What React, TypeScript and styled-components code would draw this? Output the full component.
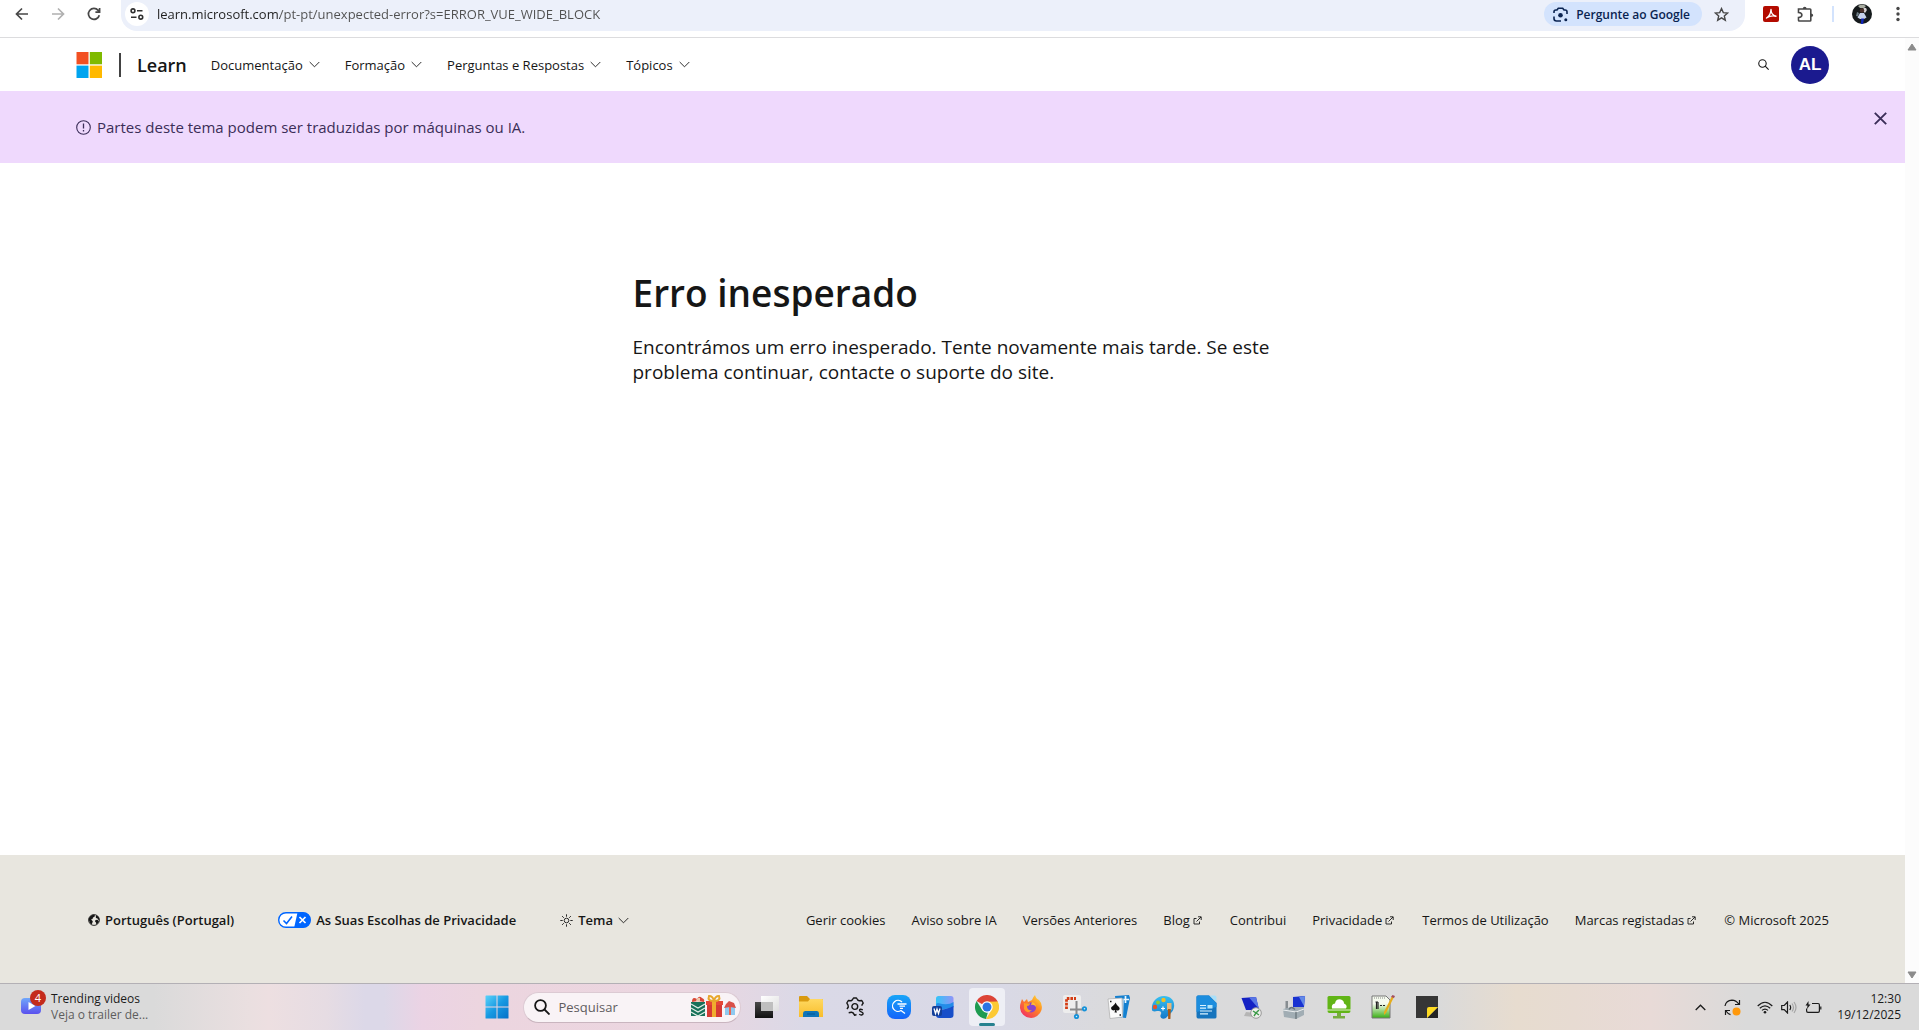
import React from "react";
import styled, { createGlobalStyle } from "styled-components";

const GlobalStyle = createGlobalStyle`
  * { box-sizing: border-box; }
  body { margin: 0; background: #fff; color: #161616; font-family: "Open Sans", "Noto Sans", sans-serif; }
  button, input { font: inherit; color: inherit; border: 0; padding: 0; background: none; }
  svg { display: block; flex: none; }
  a { color: inherit; text-decoration: none; white-space: nowrap; }
`;

const Screen = styled.div`
  display: flex;
  flex-direction: column;
  height: 100vh;
  overflow: hidden;
`;

/* ---------- Browser toolbar ---------- */

const Toolbar = styled.header`
  display: flex;
  align-items: flex-start;
  height: 38px;
  border-bottom: 1px solid #dcdcde;
`;

const ToolGroup = styled.div<{ $gap: number; $left: number; $right: number }>`
  display: flex;
  align-items: center;
  gap: ${(p) => p.$gap}px;
  height: 28px;
  padding: 0 ${(p) => p.$right}px 0 ${(p) => p.$left}px;
`;

const IconButton = styled.button<{ $color?: string }>`
  display: flex;
  align-items: center;
  justify-content: center;
  color: ${(p) => p.$color ?? "#474747"};
`;

const AddressBar = styled.div`
  display: flex;
  align-items: center;
  flex: 1;
  height: 31px;
  padding: 0 16px 3px 4px;
  background: #ecf0fa;
  border-radius: 0 0 16px 16px;
`;

const SiteInfo = styled.button`
  display: flex;
  align-items: center;
  justify-content: center;
  width: 24px;
  height: 24px;
  border-radius: 12px;
  background: #fff;
`;

const Url = styled.input`
  flex: 1;
  min-width: 0;
  height: 24px;
  margin-left: 8px;
  font-size: 13px;
  color: #1f1f1f;
  background: linear-gradient(90deg, #1f1f1f 123px, #505050 123px);
  -webkit-background-clip: text;
  background-clip: text;
  -webkit-text-fill-color: transparent;
`;

const AskChip = styled.button`
  display: flex;
  align-items: center;
  gap: 8px;
  height: 24px;
  padding: 0 12px 0 9px;
  border-radius: 12px;
  background: #d3e3fd;
  color: #0a2351;
  font-size: 12px;
  font-weight: 600;
  white-space: nowrap;
  margin-right: 12px;
`;

const Separator = styled.span`
  width: 2px;
  height: 16px;
  background: #d3e3fd;
`;

/* ---------- Page ---------- */

const Viewport = styled.div`
  display: flex;
  flex: 1;
  min-height: 0;
`;

const Page = styled.div`
  display: flex;
  flex-direction: column;
  flex: 1;
  min-width: 0;
`;

const ScrollTrack = styled.div`
  display: flex;
  flex-direction: column;
  justify-content: space-between;
  align-items: center;
  width: 14px;
  padding: 5px 0 4px;
  background: #fcfcfc;
`;

const SiteNav = styled.nav`
  display: flex;
  align-items: center;
  height: 53px;
  padding: 0 76px;
`;

const Brand = styled.a`
  margin-left: 16px;
  padding-top: 1px;
  font-size: 18px;
  line-height: 24px;
  font-weight: 600;
`;

const Divider = styled.span`
  width: 2px;
  height: 24px;
  margin-left: 17px;
  background: #424242;
`;

const Menu = styled.div`
  display: flex;
  flex: 1;
  gap: 25px;
  margin-left: 24px;
`;

const MenuButton = styled.button`
  display: flex;
  align-items: center;
  gap: 6px;
  font-size: 13px;
  line-height: 20px;
  white-space: nowrap;
`;

const Avatar = styled.button`
  width: 38px;
  height: 38px;
  margin-left: 22px;
  border-radius: 50%;
  background: #1b1a8f;
  color: #fff;
  font-family: "Liberation Sans", Arial, sans-serif;
  font-size: 17px;
  font-weight: 700;
`;

const Banner = styled.section`
  display: flex;
  justify-content: space-between;
  height: 72px;
  padding: 18px 18px 0 76px;
  background: #efd9fd;
  color: #3b2e58;
`;

const BannerText = styled.p`
  display: flex;
  align-items: center;
  gap: 6px;
  height: 36px;
  margin: 0;
  font-size: 15px;
`;

const BannerClose = styled.button`
  display: flex;
  align-items: flex-end;
  height: 16px;
`;

const Main = styled.main`
  flex: 1;
  width: 640px;
  margin: 0 auto;
  padding-top: 104px;
`;

const Title = styled.h1`
  margin: 0;
  font-size: 37px;
  line-height: 52px;
  font-weight: 600;
`;

const Lead = styled.p`
  margin: 16px 0 0;
  font-size: 19px;
  line-height: 25px;
`;

const SiteFooter = styled.footer`
  display: flex;
  align-items: center;
  justify-content: space-between;
  height: 128px;
  padding: 2px 76px 0 88px;
  background: #e8e6df;
  font-size: 13px;
  line-height: 20px;
`;

const Row = styled.div<{ $gap: number }>`
  display: flex;
  align-items: center;
  gap: ${(p) => p.$gap}px;
`;

const FooterAction = styled.button`
  display: flex;
  align-items: center;
  gap: 5px;
  font-weight: 600;
  white-space: nowrap;
`;

const FooterLink = styled.a<{ $external?: boolean }>`
  display: flex;
  align-items: center;
  gap: 3px;
  padding-right: ${(p) => (p.$external ? 2 : 0)}px;
`;

/* ---------- Taskbar ---------- */

const Taskbar = styled.footer`
  display: grid;
  grid-template-columns: 1fr auto 1fr;
  align-items: center;
  height: 47px;
  border-top: 1px solid #b3b0b5;
  background: linear-gradient(
    90deg,
    #dadada 8%, #eadfe0 13%, #eddfe1 14%, #e6dce3 17%, #dcd8e8 19%, #dcd8e8 20%, #ebd3e4 22%,
    #ecd5df 25%, #ebd6e0 36%, #dad9e7 42%, #d9d9e6 52%, #dadadc 58%, #dadada 75%,
    #e7dccf 79%, #e7dbd2 82%, #e8dad7 86%, #dadada 91%
  );
`;

const Widget = styled.button`
  display: flex;
  align-items: center;
  gap: 4px;
  padding-left: 19px;
  text-align: left;
`;

const WidgetText = styled.span<{ $muted?: boolean }>`
  display: block;
  font-size: 12px;
  line-height: 16px;
  color: ${(p) => (p.$muted ? "#5d5d5d" : "#1b1b1b")};
`;

const Apps = styled.div`
  display: flex;
  align-items: center;
  padding-left: 4px;
`;

const AppButton = styled.button<{ $active?: boolean }>`
  display: flex;
  position: relative;
  align-items: center;
  justify-content: center;
  width: 44px;
  height: 46px;
  ${(p) =>
    p.$active &&
    `&::before { content: ""; position: absolute; inset: 4px; border-radius: 4px; background: #eeeff5; }
     &::after { content: ""; position: absolute; bottom: 4px; left: 14px; width: 16px; height: 3px; border-radius: 2px; background: #27818f; }`}
  svg { position: relative; }
`;

const SearchBox = styled.label`
  display: flex;
  align-items: center;
  width: 218px;
  height: 31px;
  margin: 0 4px;
  padding: 0 4px 0 10px;
  border-radius: 16px;
  background: #f9f3f6;
  border: 1px solid #dccad3;
  border-bottom-color: #c9b5bf;
`;

const SearchInput = styled.input`
  flex: 1;
  min-width: 0;
  margin-left: 9px;
  font-size: 13px;
  &::placeholder { color: #5f5c5e; opacity: 1; }
`;

const Tray = styled.div`
  display: flex;
  align-items: center;
  justify-content: flex-end;
  padding-right: 18px;
  color: #1b1b1b;
`;

const TrayButton = styled.button<{ $gap: number }>`
  display: flex;
  margin-right: ${(p) => p.$gap}px;
`;

const Clock = styled.time`
  font-size: 12px;
  line-height: 16px;
  text-align: right;
`;

/* ---------- Icons ---------- */

const line = { fill: "none", stroke: "currentColor" } as const;

const Chevron = () => (
  <svg width="11" height="7" viewBox="0 0 11 7" {...line} strokeWidth=".9"><path d="M.7 1l4.8 4.8L10.3 1" /></svg>
);

const External = () => (
  <svg width="9" height="9" viewBox="0 0 9 9" {...line} strokeWidth=".9"><path d="M3.500 2.500H1V8h5.500V5.500M3.500 5.500L8 1M5 .8h3.200V4" /></svg>
);

const BackArrow = ({ flip }: { flip?: boolean }) => (
  <svg width="14" height="14" viewBox="0 0 14 14" {...line} strokeWidth="1.700">
    <path d={flip ? "M1 7h11M7 1.5L12.5 7 7 12.5" : "M13 7H2M7 1.5L1.5 7 7 12.5"} />
  </svg>
);

const Reload = () => (
  <svg width="14" height="14" viewBox="0 0 14 14" {...line} strokeWidth="1.700"><path d="M12.300 8.200A5.500 5.500 0 1 1 11.200 3.400L12.500 4.800M12.600 1v4.200H8.400" /></svg>
);

const Tune = () => (
  <svg width="14" height="12" viewBox="0 0 14 12" {...line} stroke="#303030" strokeWidth="1.600">
    <circle cx="3" cy="2.800" r="1.900" /><path d="M7 2.800h5.500M1 9.200h5.500" /><circle cx="10.800" cy="9.200" r="1.900" />
  </svg>
);

const Lens = () => (
  <svg width="15" height="15" viewBox="0 0 15 15" {...line} strokeWidth="1.600">
    <path d="M1 6V4.800Q1 3 2.800 3H4l1.300-1.800h4.400L11 3h1.200Q14 3 14 4.800V7M1 9.500v2Q1 14 3.500 14H8" />
    <circle cx="7.500" cy="8.300" r="2.300" fill="currentColor" stroke="none" /><circle cx="12.800" cy="12.800" r="1.500" fill="currentColor" stroke="none" />
  </svg>
);

const Star = () => (
  <svg width="15" height="15" viewBox="0 0 15 15" {...line} strokeWidth="1.400"><path d="M7.500 1.600l1.800 4 4.300.4-3.300 2.900 1 4.300-3.800-2.300-3.800 2.300 1-4.300L1.400 6l4.300-.4z" /></svg>
);

const Acrobat = () => (
  <svg width="16" height="16" viewBox="0 0 16 16">
    <rect width="16" height="16" rx="2" fill="#b30b00" />
    <path d="M3.500 12C6 10.500 7.800 7.500 8 3.500 8 7.500 10 9.500 13 10.200 9.500 9.300 6.500 10 3.500 12z" fill="none" stroke="#fff" strokeWidth="1.400" strokeLinejoin="round" />
  </svg>
);

const Puzzle = () => (
  <svg width="17" height="17" viewBox="0 0 17 17" {...line} strokeWidth="1.600">
    <path d="M1.500 3H13q.8 0 .8.800V14.200q0 .8-.8.800H2.300q-.8 0-.8-.8V11.500q3.400-.3 3.400-2.500T1.500 6.500z" />
    <path d="M5.800 3Q5.800.8 7.700.8T9.600 3zM13.800 7.500q2.400 0 2.400 1.800t-2.400 1.800z" fill="currentColor" stroke="none" />
  </svg>
);

const Profile = () => (
  <svg width="20" height="20" viewBox="0 0 20 20">
    <circle cx="10" cy="10" r="10" fill="#151a1c" />
    <path d="M6 2q4-3 8 0l-2 2H8z" fill="#a9ada2" /><path d="M11.500 4q3.500-1 3.200 2.500L13 9l-2-2z" fill="#d9d5d6" />
    <circle cx="10" cy="6.500" r="2.200" fill="#4a302b" /><path d="M5.500 13.500L8 9h4l2.500 4.500L12 15H8z" fill="#c8d3ec" /><path d="M9.200 14.500H12L11 20H9z" fill="#1226b8" /><path d="M5 8l2 1-1 3.500-2-.5z" fill="#6f7f88" />
  </svg>
);

const Dots = () => (
  <svg width="16" height="16" viewBox="0 0 16 16" fill="currentColor"><circle cx="8" cy="2.500" r="1.700" /><circle cx="8" cy="8" r="1.700" /><circle cx="8" cy="13.500" r="1.700" /></svg>
);

const MsLogo = () => (
  <svg width="26" height="26" viewBox="0 0 26 26">
    <path fill="#f25022" d="M.5 0h12v12.300H.500z" /><path fill="#7fba00" d="M13.800 0H26v12.300H13.800z" />
    <path fill="#00a4ef" d="M.5 13.600h12V26H.500z" /><path fill="#ffb900" d="M13.800 13.600H26V26H13.800z" />
  </svg>
);

const Search = ({ size, weight }: { size: number; weight: number }) => (
  <svg width={size} height={size} viewBox="0 0 16 16" {...line} strokeWidth={weight}><circle cx="6.500" cy="6.500" r="5.400" /><path d="M10.500 10.500l5 5" /></svg>
);

const Info = () => (
  <svg width="15" height="15" viewBox="0 0 15 15" {...line} strokeWidth="1.100"><circle cx="7.500" cy="7.500" r="6.800" /><path d="M7.500 3.500v5M7.500 10v1.400" strokeWidth="1.300" /></svg>
);

const Cross = () => (
  <svg width="13" height="13" viewBox="0 0 13 13" {...line} strokeWidth="1.900"><path d="M.8.8l11.400 11.400M12.200.8L.8 12.200" /></svg>
);

const Globe = () => (
  <svg width="12" height="12" viewBox="0 0 12 12" {...line}>
    <circle cx="6" cy="6" r="5.400" strokeWidth=".9" />
    <path fill="currentColor" stroke="none" d="M.8 4.500L2.500 2 5 .8l2 .5-.5 1.500L5 3.500 4.500 5 3 5.500 4.800 7.200 4.300 9l-.8 1.500Q1.500 9 1 6.500zM8.500 1.300L10.600 3 11.400 5.500 10.500 6l-1-1.500L8 4l-.3-1.300zM7.500 6l2-.3 1.500 1.500L9.500 9.800 8.300 10.500 8 8.500 7 7.500z" />
  </svg>
);

const PrivacyPill = () => (
  <svg width="33" height="16" viewBox="0 0 33 16">
    <rect x=".7" y=".7" width="31.600" height="14.600" rx="7.300" fill="#fff" stroke="#0066ff" strokeWidth="1.400" />
    <path d="M19.500.5H25a7.500 7.500 0 0 1 0 15h-8.800z" fill="#0066ff" />
    <path d="M5.500 8.500l3 3 5.500-7" fill="none" stroke="#0066ff" strokeWidth="1.600" /><path d="M21.500 5l6 6M27.500 5l-6 6" stroke="#fff" strokeWidth="1.700" />
  </svg>
);

const Sun = () => (
  <svg width="13" height="13" viewBox="0 0 13 13" {...line} strokeWidth=".9">
    <circle cx="6.500" cy="6.500" r="2.300" /><path d="M6.500.3v2.400M6.500 10.300v2.400M.3 6.500h2.400M10.300 6.500h2.400M2.100 2.100l1.700 1.700M9.200 9.200l1.700 1.700M2.100 10.900l1.700-1.700M9.200 3.800l1.700-1.700" />
  </svg>
);

const ScrollArrow = ({ down }: { down?: boolean }) => (
  <svg width="10" height="8" viewBox="0 0 10 8"><path fill="#8b8b8b" stroke="#8b8b8b" strokeLinejoin="round" d={down ? "M1 1h8L5 7z" : "M1 7h8L5 1z"} /></svg>
);

const VideoBadge = () => (
  <svg width="28" height="34" viewBox="0 0 28 34">
    <defs><linearGradient id="vid" x2="0" y2="1"><stop stopColor="#70a7fa" /><stop offset="1" stopColor="#5a50ee" /></linearGradient></defs>
    <rect x="2" y="8" width="20" height="16" rx="4" fill="url(#vid)" /><path d="M9.500 12v8l7-4z" fill="#fff" />
    <circle cx="19" cy="8" r="8" fill="#c42b1c" /><text x="19" y="12" fill="#fff" fontSize="11" textAnchor="middle">4</text>
  </svg>
);

const Windows = () => (
  <svg width="24" height="24" viewBox="0 0 24 24">
    <defs><linearGradient id="win" x2="1" y2="1"><stop stopColor="#5ad2fa" /><stop offset=".5" stopColor="#1799e2" /><stop offset="1" stopColor="#0670c8" /></linearGradient></defs>
    <path fill="url(#win)" d="M1 .5h10.500v11H.5V1zM12.500.5H23q.5 0 .5.500v10.500h-11zM.5 12.500h11v11H1q-.5 0-.5-.5zM12.500 12.500h11V23q0 .5-.5.500H12.500z" />
  </svg>
);

const Gifts = () => (
  <svg width="46" height="24" viewBox="0 0 46 24">
    <path d="M1 7h14v14H1z" fill="#19715a" /><path d="M1 9l7 4 7-4M1 13l7 4 7-4M1 17l7 4 7-4" fill="none" stroke="#e5eee8" strokeWidth="1.200" />
    <path d="M2 7q0-6 5-3 2-4 5-1 3 1 2 4l-6-1z" fill="#d94737" /><path d="M6 6q1-4 4-3v4z" fill="#eec8ad" />
    <path d="M16 6h17v4H16z" fill="#e44637" /><path d="M17 10h15v12H17z" fill="#d63a35" /><path d="M22 5h4v17h-4z" fill="#f0ad2e" />
    <path d="M24 6Q17 6 19 1q4 0 5 5 1-5 5-5 2 5-5 5" fill="none" stroke="#e7a72c" strokeWidth="2" />
    <path d="M35 12h10v8H35z" fill="#8fc9ef" /><path d="M39 12h2v8h-2z" fill="#e96854" /><path d="M34 13l2-4 3-3 5 2 2 5-6-1z" fill="#d95049" />
  </svg>
);

const TaskView = () => (
  <svg width="24" height="24" viewBox="0 0 24 24">
    <defs>
      <linearGradient id="tv" x2="0" y2="1"><stop stopColor="#494949" /><stop offset="1" stopColor="#111" /></linearGradient>
      <linearGradient id="tw" x2="1" y2="1"><stop stopColor="#fff" /><stop offset="1" stopColor="#dedede" /></linearGradient>
    </defs>
    <path d="M0 7h18v16H0z" fill="url(#tv)" /><path d="M6 1h18v15H6z" fill="url(#tw)" /><path d="M6 7h12v9H6z" fill="#bfbfbf" />
  </svg>
);

const Folder = () => (
  <svg width="24" height="24" viewBox="0 0 24 24">
    <defs><linearGradient id="fo" x2="0" y2="1"><stop stopColor="#ffd962" /><stop offset="1" stopColor="#f8bd2c" /></linearGradient></defs>
    <path d="M0 2q0-1 1-1h7l3 3H23q1 0 1 1v4H0z" fill="#d99a10" /><path d="M0 6.500h9L11 4h12q1 0 1 1v17H0z" fill="url(#fo)" />
    <path d="M4 22v-3.500Q4 16 6 16h12q2 0 2 2.500V22z" fill="#0f75b8" /><path d="M8 19h8" stroke="#075694" />
  </svg>
);

const GearS = () => (
  <svg width="18" height="20" viewBox="0 0 18 20" fill="none" stroke="#181818" strokeWidth="1.400" strokeLinejoin="round">
    <path d="M10.500 17.500l-1.800.800-1.500-2.300-1.800-.8-2.700.5M1 12l1.300-2-.3-1.800L.8 6 2.300 3.500l2.700.3 1.300-.9L7.500 1h3l1.200 2 1.600.8 2.500-.3L17.200 6 16 7.800v1" /><circle cx="8.800" cy="9.500" r="2.900" />
    <path d="M16.800 12.800q-3.300-1.300-3.300.5c0 1.700 3.600 1.300 3.600 3.200 0 1.800-2.600 1.800-3.900.8" strokeWidth="1.400" />
  </svg>
);

const QuickSearch = () => (
  <svg width="24" height="24" viewBox="0 0 24 24">
    <defs><linearGradient id="qs" x2="0" y2="1"><stop stopColor="#18a5f8" /><stop offset="1" stopColor="#1464fa" /></linearGradient></defs>
    <rect width="24" height="24" rx="8" fill="url(#qs)" /><path d="M15 7A5.500 5.500 0 1 0 14 15.500l4 3M10.500 9h9M12.500 11.200h5.500M13 13.400h3" fill="none" stroke="#fff" strokeWidth="1.300" />
  </svg>
);

const Word = () => (
  <svg width="22" height="24" viewBox="0 0 22 24">
    <defs><linearGradient id="wd" x2="1"><stop stopColor="#32c5f8" /><stop offset="1" stopColor="#9194f7" /></linearGradient></defs>
    <rect x="4" y="1" width="17.500" height="13" rx="2.500" fill="url(#wd)" /><path d="M4 10Q4 8 6 8q10 3 15.500-1v5L4 16z" fill="#238ce8" />
    <path d="M4 15q10 0 17.500-4v9q0 3-3 3H7q-3 0-3-3z" fill="#174ec9" /><rect y="11" width="10" height="10" rx="2" fill="#133f99" />
    <path d="M2 13.500l1.500 5L5 14l1.500 4.500 1.500-5" fill="none" stroke="#fff" strokeWidth="1.300" />
  </svg>
);

const Chrome = () => (
  <svg width="24" height="24" viewBox="0 0 24 24">
    <path d="M12 12L1.600 6A12 12 0 0 1 22.400 6z" fill="#dc4437" /><path d="M12 6.500L22.400 6A12 12 0 0 1 11 24l5.800-9.500z" fill="#fcc934" />
    <path d="M1.600 6l5.600 9 4.800 2.500 1-.500-2 7A12 12 0 0 1 1.600 6z" fill="#1e9b50" />
    <path d="M1.600 6L7 6.500h15.700L22.400 6z" fill="#dc4437" />
    <circle cx="12" cy="12" r="5.700" fill="#fff" /><circle cx="12" cy="12" r="4.500" fill="#2b74e5" />
  </svg>
);

const Firefox = () => (
  <svg width="24" height="24" viewBox="0 0 24 24">
    <defs><linearGradient id="ff" x1="1" x2=".2" y2="1"><stop stopColor="#ffe73e" /><stop offset=".45" stopColor="#ff8b21" /><stop offset="1" stopColor="#f12e64" /></linearGradient></defs>
    <path d="M2 7l1-3 2 3 3-3 1 3 4-2q1-3 3-5 1 4 4 5 4 4 2.500 10A11 11 0 0 1 1 13q0-4 1-6z" fill="url(#ff)" />
    <circle cx="12" cy="12.500" r="5" fill="#8744cc" /><path d="M5 8q4 1 6 0 0 3-3 3 0 5 5 4-5 5-8-1z" fill="#ff9c25" /><path d="M13 7q4 1 4 5-2-3-5-2z" fill="#ffbd31" />
  </svg>
);

const Snip = () => (
  <svg width="24" height="24" viewBox="0 0 24 24">
    <rect width="18" height="18" rx="2" fill="#ededed" /><path d="M3.500 14V3.500H13" fill="none" stroke="#d43c14" strokeWidth="2.800" strokeDasharray="2.600 1" />
    <path d="M13.500 6v14M7 14.500h12" stroke="#88898b" strokeWidth="2" /><g fill="#d5efff" stroke="#1591d8" strokeWidth="1.800"><circle cx="13.500" cy="21.500" r="1.700" /><circle cx="21.500" cy="13.800" r="1.700" /></g>
  </svg>
);

const Cards = () => (
  <svg width="24" height="24" viewBox="0 0 24 24">
    <path d="M8 1l14-1 1 3-4 20-9-1z" fill="#1480d0" /><path d="M18.500 1v7M15 4.500h7" stroke="#eaf7ff" strokeWidth="1.700" /><path d="M6 3l11 1-1 19-9-1z" fill="#a7ccea" />
    <path d="M1 4l14-1 .5 19L3 23.500z" fill="#fafafa" stroke="#aaa" strokeWidth=".7" /><path d="M8.500 7.500Q9.500 10 12 12c2 2.500-1 4.500-3 3l1 2.500H7.500l.7-2.500c-2.700 1.500-5-1-3.700-3 2-1.500 3.500-3 4-4.500z" fill="#111" /><path d="M3 6.500h1.500M12.500 20H14" stroke="#111" strokeWidth="1.500" />
  </svg>
);

const Paint = () => (
  <svg width="24" height="24" viewBox="0 0 24 24">
    <defs><linearGradient id="pa" x2="0" y2="1"><stop stopColor="#37c0f0" /><stop offset="1" stopColor="#1279cc" /></linearGradient></defs>
    <path d="M1 15C0 8 5 1 13 1c7 0 11 5 10 11-1 6-5 7-8 11-4 2-7-1-5-4 1-3-2-3-4-3-3 1-5 0-5-1z" fill="url(#pa)" />
    <circle cx="4" cy="12" r="2.200" fill="#e65328" /><circle cx="7" cy="7.500" r="2" fill="#8dcc37" /><circle cx="12.500" cy="5" r="2.200" fill="#f1be24" /><path d="M10 13.500h4M12 11.500v4" stroke="#fff" strokeWidth="1.200" />
    <path d="M16 8h4.500v7H16z" fill="#e8b77b" /><path d="M16.800 14h3l-.4 10h-2.200z" fill="#a45b1d" />
  </svg>
);

const Writer = () => (
  <svg width="21" height="24" viewBox="0 0 21 24">
    <path d="M2 .5h11L20.500 8v14q0 1.500-2 1.500H2q-1.500 0-1.500-2V2Q.5.500 2 .5z" fill="#1674bd" /><path d="M2 .5h11L20.500 8v4L.5 17V2Q.5.500 2 .5z" fill="#1c8dde" /><path d="M14 .5h4.500q2 0 2 2V7z" fill="#a7e0fb" />
    <path d="M4 10.500h6M4 13.200h6M4 16h12M4 18.800h8" stroke="#dbf3ff" strokeWidth="1.200" /><path d="M11.500 10h5v3.500h-5z" fill="#b2e4fa" />
  </svg>
);

const RemotePC = () => (
  <svg width="24" height="24" viewBox="0 0 24 24">
    <path d="M1 2l17-1 3 15-15 1z" fill="#d9d9dd" /><path d="M2.500 3l14.500-1 3 13-13 0z" fill="#1421c4" /><path d="M10 2.500l7-.5 3 12z" fill="#5876e5" /><path d="M7 17l9 1-1 4-10-1z" fill="#b5b5b5" />
    <circle cx="17" cy="18" r="5.300" fill="#eeeeec" stroke="#999" /><path d="M14 16l3 2-2 3M20 15l-3 3 3 2" fill="none" stroke="#3c9a48" strokeWidth="1.400" />
  </svg>
);

const Toolbox = () => (
  <svg width="24" height="24" viewBox="0 0 24 24">
    <path d="M8 1l15-1-1 12-13 1z" fill="#d5d5dc" /><path d="M10 2l12-1-1 11-11 0z" fill="#1832d1" /><path d="M16 2l6-1-1 10z" fill="#6289e7" />
    <path d="M2.500 6H5v9H2.500z" fill="#878d91" /><path d="M0 14l9-2h12v8l-8 4-12-2z" fill="#a1adb4" /><path d="M0 15l13 2 8-3" fill="none" stroke="#eceff0" /><path d="M6 14.500q2-4 6 0M13 17v7" fill="none" stroke="#69757c" strokeWidth="1.300" />
  </svg>
);

const CloudPC = () => (
  <svg width="24" height="24" viewBox="0 0 24 24">
    <path d="M2 1h20q1.500 0 1.500 1.500V16q0 2-2 2h-19q-2 0-2-2V2.500Q.5 1 2 1z" fill="#61b516" /><path d="M0 15h24" stroke="#dff2cb" /><path d="M5 13.500Q4 9 8 8.500q1-5 6-4 3 1 3 4 4 2 2 5z" fill="#fff" />
    <path d="M10 18h4v3h4v2.500H6V21h4z" fill="#76ad3d" />
  </svg>
);

const NotePad = () => (
  <svg width="24" height="24" viewBox="0 0 24 24">
    <defs><linearGradient id="np" x2="0" y2="1"><stop offset=".35" stopColor="#f5faee" /><stop offset="1" stopColor="#39af13" /></linearGradient></defs>
    <path d="M1 1h14l4 4v18H1z" fill="url(#np)" stroke="#777" /><path d="M3 3h11" stroke="#888" strokeDasharray="1 1" /><path d="M5.500 7v7M4.500 7h2.500M7 7v7M9 10.500h2M12 10.500h2" stroke="#222" strokeWidth="1.200" />
    <path d="M13 17l8-16 2 1-8 16-2 2z" fill="#e6ad1b" /><path d="M20 2l1.500-2L24 1l-1 2z" fill="#a34e60" />
  </svg>
);

const StickyNote = () => (
  <svg width="22" height="24" viewBox="0 0 22 24"><path d="M0 1h22v11L11 23H0z" fill="#363636" /><path d="M22 12v11H11z" fill="#242424" /><path d="M11 23V14q0-2 2-2h9z" fill="#ffdb22" /></svg>
);

const Sync = () => (
  <svg width="17" height="17" viewBox="0 0 17 17" {...line} strokeWidth="1.200">
    <path d="M1 7Q2 1.500 8 1.200q4 0 6.800 4M15.500 1v4.500H11M1.500 16v-4.500H6M2 12q2 3 4.500 3.700" /><circle cx="12.500" cy="12.500" r="4" fill="#ff990c" stroke="none" />
  </svg>
);

const Wifi = () => (
  <svg width="16" height="13" viewBox="0 0 16 13" {...line} strokeWidth="1.200"><path d="M.7 5q7.300-7.500 14.600 0M2.800 7.300q5.200-5 10.400 0M5 9.400q3-2.700 6 0" /><circle cx="8" cy="11.300" r="1.300" fill="currentColor" stroke="none" /></svg>
);

const Volume = () => (
  <svg width="16" height="13" viewBox="0 0 16 13" {...line} strokeWidth="1.200"><path d="M.7 4.500h2.500L6.500 1v11L3.200 8.700H.7zM8.800 4q1.700 2.500 0 5" /><path d="M11 2.500q3 4 0 8M13 1q4 5.500 0 11" stroke="#a5a5a5" /></svg>
);

const Battery = () => (
  <svg width="17" height="13" viewBox="0 0 17 13" {...line} strokeWidth="1.200"><path d="M7 2.500h6q1.400 0 1.400 1.400V10q0 1.400-1.400 1.400H3Q1.600 11.400 1.600 10V7.500M15.800 5.500v3" /><path d="M3.500 0L.5 4.500h2L2 8l3.500-4.500h-2z" fill="currentColor" stroke="none" /></svg>
);

/* ---------- Data ---------- */

const menus = ["Documentação", "Formação", "Perguntas e Respostas", "Tópicos"];

const footerLinks = [
  { label: "Gerir cookies" },
  { label: "Aviso sobre IA" },
  { label: "Versões Anteriores" },
  { label: "Blog", external: true },
  { label: "Contribui" },
  { label: "Privacidade", external: true },
  { label: "Termos de Utilização" },
  { label: "Marcas registadas", external: true },
];

const apps = [
  { name: "Vista de tarefas", Icon: TaskView },
  { name: "Explorador", Icon: Folder },
  { name: "Definições", Icon: GearS },
  { name: "Pesquisa rápida", Icon: QuickSearch },
  { name: "Word", Icon: Word },
  { name: "Chrome", Icon: Chrome, active: true },
  { name: "Firefox", Icon: Firefox },
  { name: "Recorte", Icon: Snip },
  { name: "Solitaire", Icon: Cards },
  { name: "Paint", Icon: Paint },
  { name: "Writer", Icon: Writer },
  { name: "Ambiente remoto", Icon: RemotePC },
  { name: "Ferramentas", Icon: Toolbox },
  { name: "Nuvem", Icon: CloudPC },
  { name: "Editor", Icon: NotePad },
  { name: "Notas", Icon: StickyNote },
];

export default function App() {
  return (
    <Screen>
      <GlobalStyle />
      <Toolbar>
        <ToolGroup $gap={22} $left={15} $right={20}>
          <IconButton aria-label="Anterior"><BackArrow /></IconButton>
          <IconButton aria-label="Seguinte" $color="#b0b0b0"><BackArrow flip /></IconButton>
          <IconButton aria-label="Recarregar"><Reload /></IconButton>
        </ToolGroup>
        <AddressBar>
          <SiteInfo aria-label="Informações do site"><Tune /></SiteInfo>
          <Url aria-label="Endereço" defaultValue="learn.microsoft.com/pt-pt/unexpected-error?s=ERROR_VUE_WIDE_BLOCK" />
          <AskChip><Lens />Pergunte ao Google</AskChip>
          <IconButton aria-label="Favorito"><Star /></IconButton>
        </AddressBar>
        <ToolGroup $gap={18} $left={18} $right={13}>
          <IconButton aria-label="Acrobat"><Acrobat /></IconButton>
          <IconButton aria-label="Extensões"><Puzzle /></IconButton>
          <Separator />
          <IconButton aria-label="Perfil"><Profile /></IconButton>
          <IconButton aria-label="Mais"><Dots /></IconButton>
        </ToolGroup>
      </Toolbar>

      <Viewport>
        <Page>
          <SiteNav>
            <a href="#microsoft" aria-label="Microsoft"><MsLogo /></a>
            <Divider />
            <Brand href="#learn">Learn</Brand>
            <Menu>
              {menus.map((m) => (
                <MenuButton key={m}>{m}<Chevron /></MenuButton>
              ))}
            </Menu>
            <IconButton aria-label="Procurar" $color="#161616"><Search size={11} weight={1.6} /></IconButton>
            <Avatar>AL</Avatar>
          </SiteNav>
          <Banner>
            <BannerText><Info />Partes deste tema podem ser traduzidas por máquinas ou IA.</BannerText>
            <BannerClose aria-label="Fechar"><Cross /></BannerClose>
          </Banner>
          <Main>
            <Title>Erro inesperado</Title>
            <Lead>Encontrámos um erro inesperado. Tente novamente mais tarde. Se este problema continuar, contacte o suporte do site.</Lead>
          </Main>
          <SiteFooter>
            <Row $gap={44}>
              <FooterAction><Globe />Português (Portugal)</FooterAction>
              <FooterAction><PrivacyPill />As Suas Escolhas de Privacidade</FooterAction>
              <FooterAction><Sun />Tema<Chevron /></FooterAction>
            </Row>
            <Row $gap={26}>
              {footerLinks.map((l) => (
                <FooterLink key={l.label} href="#rodape" $external={l.external}>{l.label}{l.external && <External />}</FooterLink>
              ))}
              <span>© Microsoft 2025</span>
            </Row>
          </SiteFooter>
        </Page>
        <ScrollTrack><ScrollArrow /><ScrollArrow down /></ScrollTrack>
      </Viewport>

      <Taskbar>
        <Widget>
          <VideoBadge />
          <span>
            <WidgetText>Trending videos</WidgetText>
            <WidgetText $muted>Veja o trailer de...</WidgetText>
          </span>
        </Widget>
        <Apps>
          <AppButton aria-label="Iniciar"><Windows /></AppButton>
          <SearchBox>
            <Search size={16} weight={1.8} />
            <SearchInput aria-label="Pesquisar" placeholder="Pesquisar" />
            <Gifts />
          </SearchBox>
          {apps.map(({ name, Icon, active }) => (
            <AppButton key={name} aria-label={name} $active={active}><Icon /></AppButton>
          ))}
        </Apps>
        <Tray>
          <TrayButton $gap={18} aria-label="Ícones ocultos">
            <svg width="11" height="7" viewBox="0 0 11 7" {...line} strokeWidth="1.300"><path d="M.7 6l4.800-4.800L10.300 6" /></svg>
          </TrayButton>
          <TrayButton $gap={16} aria-label="Atualização"><Sync /></TrayButton>
          <TrayButton $gap={8} aria-label="Rede"><Wifi /></TrayButton>
          <TrayButton $gap={8} aria-label="Volume"><Volume /></TrayButton>
          <TrayButton $gap={15} aria-label="Bateria"><Battery /></TrayButton>
          <Clock>12:30<br />19/12/2025</Clock>
        </Tray>
      </Taskbar>
    </Screen>
  );
}
